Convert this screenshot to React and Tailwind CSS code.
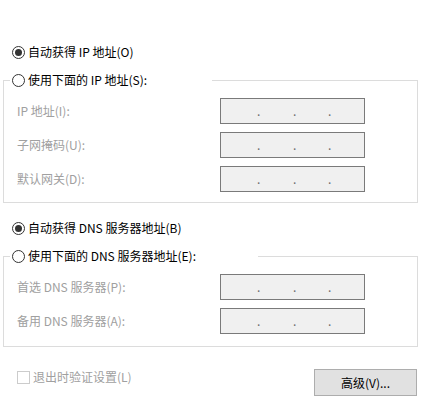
import React from "react";

function Radio({ checked, label }) {
  return (
    <span className="flex items-center h-4 gap-[3px]">
      <span className="w-[13px] h-[13px] rounded-full border border-[#333333] bg-white flex items-center justify-center">
        {checked && <span className="w-[7px] h-[7px] rounded-full bg-[#333333]" />}
      </span>
      <span className="text-black">{label}</span>
    </span>
  );
}

function IpBox() {
  return (
    <div className="w-[145px] h-[26px] border border-[#7a7a7a] bg-[#f0f0f0] flex items-center text-[#6d6d6d]">
      <span className="w-[36px]" />
      <span className="w-[3px] text-center leading-none">.</span>
      <span className="w-[33px]" />
      <span className="w-[3px] text-center leading-none">.</span>
      <span className="w-[32px]" />
      <span className="w-[3px] text-center leading-none">.</span>
    </div>
  );
}

function Row({ label, first }) {
  return (
    <div className={`flex items-center pl-[7px] ${first ? "mt-[10px]" : "mt-[8px]"}`}>
      <span className="w-[203px] text-[#a0a0a0]">{label}</span>
      <IpBox />
    </div>
  );
}

export default function App() {
  return (
    <div
      className="w-[425px] h-[407px] bg-white text-[12px] leading-4 overflow-hidden"
      style={{ fontFamily: '"Noto Sans CJK SC", "Noto Sans", sans-serif' }}
    >
      <div className="pt-[44px] pl-[12px]">
        <Radio checked label="自动获得 IP 地址(O)" />
      </div>

      <fieldset className="ml-[3px] mt-[12px] w-[415px] border border-[#dcdcdc] pl-[6px] pr-0 pb-[10px] pt-0 m-0">
        <legend className="w-[202px] pl-[2px] p-0">
          <Radio label="使用下面的 IP 地址(S):" />
        </legend>
        <Row first label="IP 地址(I):" />
        <Row label="子网掩码(U):" />
        <Row label="默认网关(D):" />
      </fieldset>

      <div className="mt-[17px] pl-[12px]">
        <Radio checked label="自动获得 DNS 服务器地址(B)" />
      </div>

      <fieldset className="ml-[3px] mt-[12px] w-[415px] border border-[#dcdcdc] pl-[6px] pr-0 pb-[12px] pt-0 m-0">
        <legend className="w-[248px] pl-[2px] p-0">
          <Radio label="使用下面的 DNS 服务器地址(E):" />
        </legend>
        <Row first label="首选 DNS 服务器(P):" />
        <Row label="备用 DNS 服务器(A):" />
      </fieldset>

      <div className="mt-[22px] flex items-start justify-between pl-[17px] pr-[8px]">
        <label className="flex items-center h-4 gap-[3px] text-[#a0a0a0]">
          <span className="w-[13px] h-[13px] border border-[#cccccc] bg-white" />
          <span>退出时验证设置(L)</span>
        </label>
        <button className="w-[103px] h-[27px] border border-[#adadad] bg-[#e1e1e1] text-black">
          高级(V)...
        </button>
      </div>
    </div>
  );
}
